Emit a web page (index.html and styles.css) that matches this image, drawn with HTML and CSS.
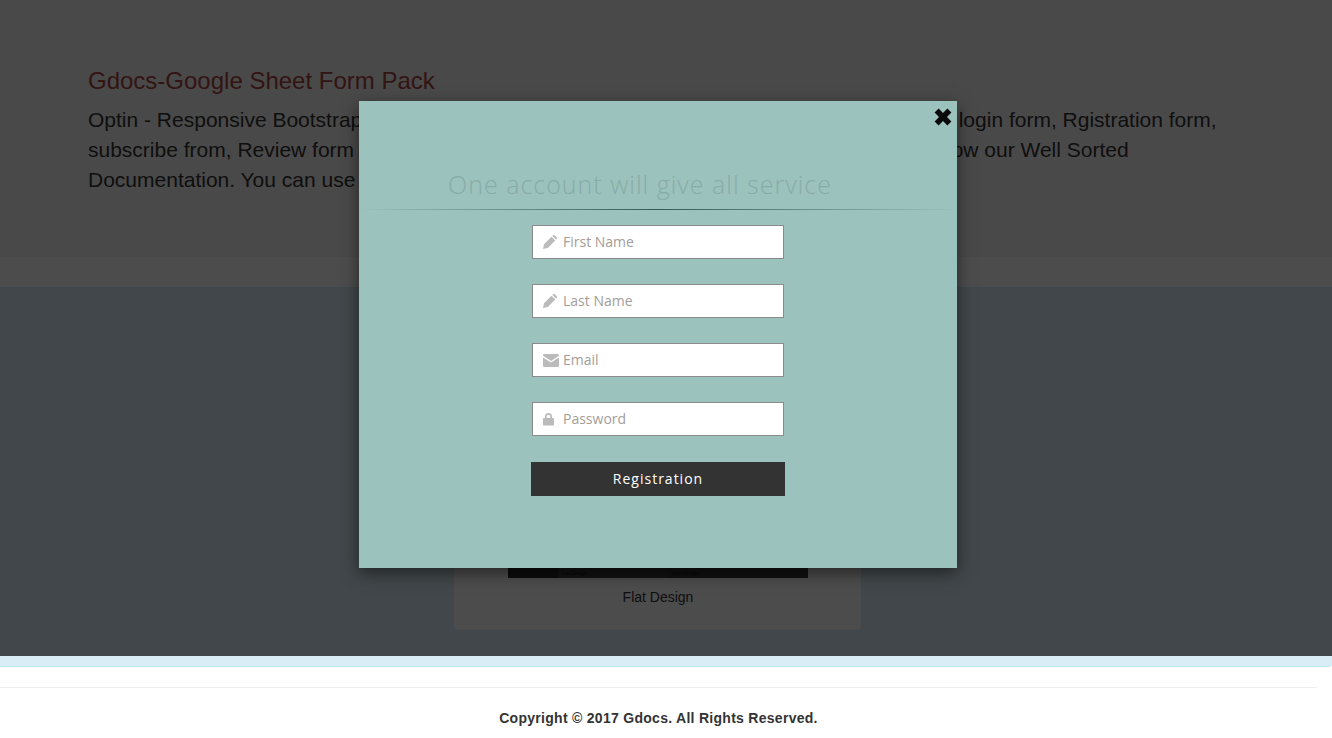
FILE: index.html
```html
<!DOCTYPE html>
<html lang="en">
<head>
    <meta charset="UTF-8">
    <meta name="viewport" content="width=device-width, initial-scale=1.0">
    <title>Gdocs-Google Sheet Form Pack</title>
    <link rel="stylesheet" href="styles.css">
</head>
<body>
    <div class="page">
        <section class="intro">
            <h2 class="intro-title">Gdocs-Google Sheet Form Pack</h2>
            <p class="intro-text">Optin - Responsive Bootstrap Google Sheet Form Pack. It has many forms, like contact form, login form, Rgistration form, subscribe from, Review form and many more. Every single form is easy to customize, just follow our Well Sorted Documentation. You can use any form in your website.</p>
        </section>
        <div class="strip"></div>
        <section class="showcase">
            <div class="card">
                <div class="shot">
                    <span class="shot-part shot-left"></span>
                    <span class="shot-part shot-mid">Flat Design</span>
                    <span class="shot-part shot-right">Step Design</span>
                </div>
                <p class="card-caption">Flat Design</p>
            </div>
        </section>
        <footer class="footer">
            <p class="copyright">Copyright © 2017 Gdocs. All Rights Reserved.</p>
        </footer>
    </div>

    <div class="overlay"></div>

    <div class="modal">
        <button class="close" aria-label="Close">
            <svg viewBox="0 0 18 18" width="18" height="18"><path d="M.6 4.600 4.600.6 9 5 13.400.6l4 4L13 9l4.400 4.400-4 4L9 13l-4.400 4.400-4-4L5 9z"/></svg>
        </button>
        <h3 class="modal-title">One account will give all service</h3>
        <div class="divider"></div>
        <form class="form">
            <label class="field">
                <svg class="icon" viewBox="0 0 16 14" width="16" height="14"><path d="M0 14l1-4.800 7.500-7.500 3.800 3.800-7.500 7.500zM9.400 1 10.100.3c.5-.4 1.200-.4 1.600 0l2 2c.4.400.4 1.100 0 1.600l-.7.700z"/></svg>
                <input type="text" placeholder="First Name">
            </label>
            <label class="field">
                <svg class="icon" viewBox="0 0 16 14" width="16" height="14"><path d="M0 14l1-4.800 7.500-7.500 3.800 3.800-7.500 7.500zM9.400 1 10.100.3c.5-.4 1.200-.4 1.600 0l2 2c.4.400.4 1.100 0 1.600l-.7.700z"/></svg>
                <input type="text" placeholder="Last Name">
            </label>
            <label class="field">
                <svg class="icon" viewBox="0 0 16 13" width="16" height="13"><path d="M1.300 0h13.400C15.500 0 16 .6 16 1.300v.5L8 7 0 1.800v-.5C0 .6.500 0 1.300 0zM0 3.400 8 8.600l8-5.200v8.300c0 .700-.500 1.300-1.300 1.300H1.300C.500 13 0 12.400 0 11.700z"/></svg>
                <input type="email" placeholder="Email">
            </label>
            <label class="field">
                <svg class="icon" viewBox="1.500 0 16 14" width="16" height="14"><path d="M3.500 6V4.500a3.500 3.500 0 0 1 7 0V6h1c.500 0 1 .400 1 1v5.500c0 .600-.500 1-1 1h-9c-.500 0-1-.400-1-1V7c0-.600.500-1 1-1zm1.700 0h3.600V4.500a1.800 1.800 0 0 0-3.600 0z"/></svg>
                <input type="password" placeholder="Password">
            </label>
            <button class="submit" type="button">Registration</button>
        </form>
    </div>
</body>
</html>
```

FILE: styles.css
```css
* {
    box-sizing: border-box;
}

html,
body {
    margin: 0;
    height: 100%;
    overflow: hidden;
}

body {
    position: relative;
    font-family: "Liberation Sans", Arial, sans-serif;
    background-color: #fff;
    color: #333;
}

.page {
    display: flex;
    flex-direction: column;
    height: 738px;
}

.intro {
    height: 257px;
    padding: 67px 88px 0;
    background-color: #f5f5f5;
}

.intro-title {
    margin: 0 0 11px;
    font-size: 24px;
    font-weight: 400;
    line-height: 27px;
    color: #a94442;
}

.intro-text {
    margin: 0;
    width: 1150px;
    font-size: 21px;
    line-height: 30px;
    color: #333;
}

.strip {
    height: 30px;
    background-color: #fff;
}

.showcase {
    height: 380px;
    display: flex;
    justify-content: center;
    align-items: flex-end;
    padding-right: 18px;
    padding-bottom: 36px;
    background-color: #d9edf7;
    border-bottom: 1px solid #bce8f1;
    border-bottom-right-radius: 4px;
}

.card {
    width: 407px;
    height: 320px;
    padding: 0 54px;
    background-color: #fff;
    border-radius: 4px;
    display: flex;
    flex-direction: column;
    justify-content: flex-end;
}

.shot {
    height: 200px;
    width: 300px;
    background-color: #333;
    display: flex;
    align-items: flex-end;
}

.shot-part {
    height: 100%;
    display: flex;
    align-items: flex-end;
    padding: 0 0 1px 4px;
    font-size: 5px;
    line-height: 8px;
    color: #111;
}

.shot-left {
    width: 50px;
    background-color: #2a2a2a;
}

.shot-mid {
    width: 110px;
    background-color: #3c3c3c;
}

.shot-right {
    width: 140px;
    background-color: #383838;
}

.card-caption {
    margin: 0;
    padding: 9px 0 23px 2px;
    font-size: 14px;
    line-height: 20px;
    text-align: center;
}

.footer {
    flex: 1;
    padding-top: 20px;
}

.copyright {
    margin: 0;
    width: 1317px;
    padding-top: 22px;
    border-top: 1px solid #eee;
    font-size: 14px;
    font-weight: 700;
    line-height: 17px;
    letter-spacing: 0.28px;
    text-align: center;
}

.overlay {
    position: absolute;
    top: 0;
    left: 0;
    width: 100%;
    height: 656px;
    background-color: rgba(0, 0, 0, 0.7);
}

.modal {
    position: absolute;
    top: 101px;
    left: 359px;
    width: 598px;
    height: 467px;
    padding-top: 65px;
    background-color: #9cc2bd;
    box-shadow: 0 5px 15px rgba(0, 0, 0, 0.5);
}

.close {
    position: absolute;
    top: 7px;
    right: 5px;
    padding: 0;
    border: none;
    background: none;
    line-height: 0;
    cursor: pointer;
}

.close svg {
    fill: #0a0a0a;
}

.modal-title {
    margin: 0;
    padding-right: 36px;
    font-family: "Open Sans", sans-serif;
    font-size: 25px;
    font-weight: 300;
    line-height: 36px;
    letter-spacing: 1px;
    text-align: center;
    color: #88aca7;
}

.divider {
    height: 1px;
    margin-top: 7px;
    background: linear-gradient(to right, transparent, #345c55, transparent);
}

.form {
    display: flex;
    flex-direction: column;
    align-items: center;
    padding-top: 15px;
}

.field {
    display: flex;
    align-items: center;
    gap: 4px;
    width: 252px;
    height: 34px;
    margin-bottom: 25px;
    padding-left: 10px;
    background-color: #fff;
    border: 1px solid #8a8a8a;
}

.icon {
    flex: 0 0 16px;
    fill: #bbb;
}

.field input {
    flex: 1;
    min-width: 0;
    padding: 0 0 2px;
    border: none;
    outline: none;
    font-family: "Open Sans", sans-serif;
    font-size: 14px;
    color: #555;
}

.field input::placeholder {
    color: #a39d98;
    opacity: 1;
}

.submit {
    width: 254px;
    height: 34px;
    margin-top: 1px;
    padding: 0 0 2px;
    border: none;
    background-color: #333;
    font-family: "Open Sans", sans-serif;
    font-size: 14px;
    letter-spacing: 1px;
    color: #fff;
    cursor: pointer;
}
```
